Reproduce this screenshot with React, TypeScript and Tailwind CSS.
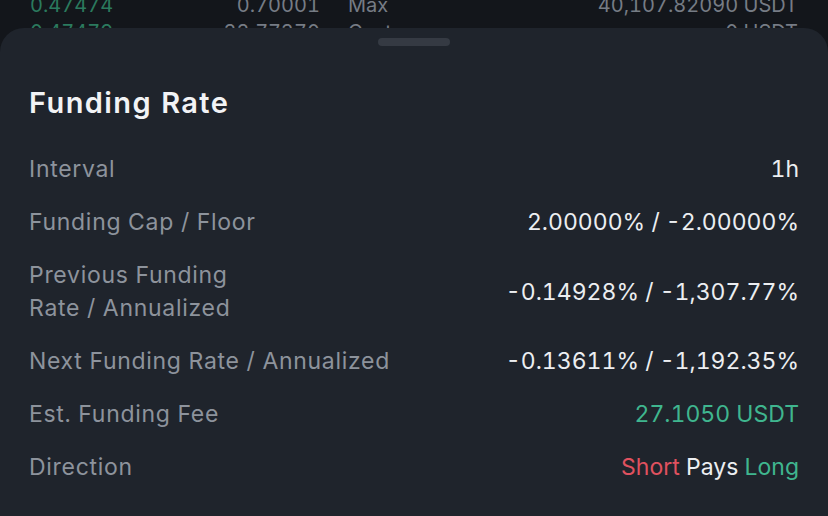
import React from "react";

const rows: { label: string[]; value: React.ReactNode }[] = [
  { label: ["Interval"], value: "1h" },
  { label: ["Funding Cap / Floor"], value: "2.00000% / -2.00000%" },
  { label: ["Previous Funding", "Rate / Annualized"], value: "-0.14928% / -1,307.77%" },
  { label: ["Next Funding Rate / Annualized"], value: "-0.13611% / -1,192.35%" },
  { label: ["Est. Funding Fee"], value: <span className="text-[#3fb68f]">27.1050 USDT</span> },
  {
    label: ["Direction"],
    value: (
      <span>
        <span className="text-[#e0515f]">Short</span> Pays <span className="text-[#3fb68f]">Long</span>
      </span>
    ),
  },
];

export default function App() {
  return (
    <div
      className="relative w-[828px] h-[516px] overflow-hidden bg-[#13161b] tabular-nums"
      style={{ fontFamily: "Inter, 'Noto Sans', sans-serif" }}
    >
      {/* order book behind the sheet */}
      <div className="flex flex-col -mt-[8px] text-[20px] leading-[27px] text-[#767c85]">
        <div className="flex px-[30px]">
          <div className="flex justify-between w-[290px]">
            <span className="text-[#2b7a5e]">0.47474</span>
            <span>0.70001</span>
          </div>
          <div className="flex justify-between flex-1 pl-[28px]">
            <span>Max</span>
            <span>40,107.82090 USDT</span>
          </div>
        </div>
        <div className="flex px-[30px]">
          <div className="flex justify-between w-[290px]">
            <span className="text-[#2b7a5e]">0.47479</span>
            <span>33.77370</span>
          </div>
          <div className="flex justify-between flex-1 pl-[28px]">
            <span>Cost</span>
            <span>0 USDT</span>
          </div>
        </div>
      </div>

      {/* bottom sheet */}
      <div className="absolute left-0 right-0 top-[28px] bottom-[-40px] rounded-t-[24px] bg-[#1f242c] px-[29px]">
        <div className="flex justify-center pt-[10px]">
          <div className="w-[72px] h-[8px] rounded-full bg-[#353a43]" />
        </div>
        <h2 className="mt-[40px] text-[29px] leading-[34px] font-semibold text-[#f2f3f5] tracking-[1.4px]">
          Funding Rate
        </h2>
        <div className="mt-[33px] flex flex-col gap-[20px] text-[23px] leading-[33px]">
          {rows.map((r, i) => (
            <div key={i} className="flex justify-between items-center">
              <div className="text-[#8d939c] tracking-[0.7px]">
                {r.label.map((l, j) => (
                  <div key={j}>{l}</div>
                ))}
              </div>
              <div className="text-[#eceef1]">{r.value}</div>
            </div>
          ))}
        </div>
      </div>
    </div>
  );
}
